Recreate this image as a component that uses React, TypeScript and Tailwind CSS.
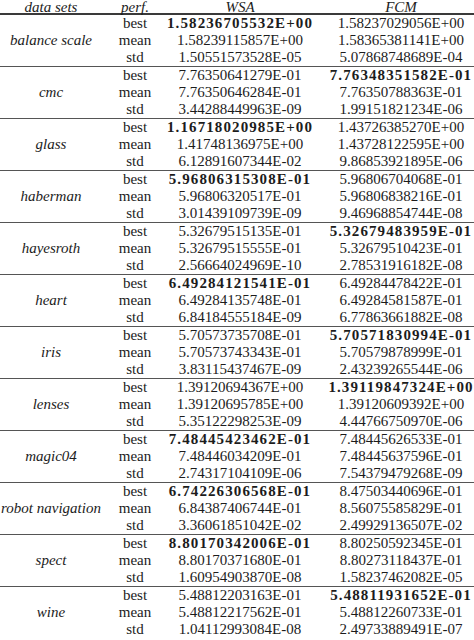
type Group = {
  name: string
  rows: [string, string, string, 'wsa' | 'fcm' | null][]
}

const groups: Group[] = [
  {
    name: 'balance scale',
    rows: [
      ['best', '1.58236705532E+00', '1.58237029056E+00', 'wsa'],
      ['mean', '1.58239115857E+00', '1.58365381141E+00', null],
      ['std', '1.50551573528E-05', '5.07868748689E-04', null],
    ],
  },
  {
    name: 'cmc',
    rows: [
      ['best', '7.76350641279E-01', '7.76348351582E-01', 'fcm'],
      ['mean', '7.76350646284E-01', '7.76350788363E-01', null],
      ['std', '3.44288449963E-09', '1.99151821234E-06', null],
    ],
  },
  {
    name: 'glass',
    rows: [
      ['best', '1.16718020985E+00', '1.43726385270E+00', 'wsa'],
      ['mean', '1.41748136975E+00', '1.43728122595E+00', null],
      ['std', '6.12891607344E-02', '9.86853921895E-06', null],
    ],
  },
  {
    name: 'haberman',
    rows: [
      ['best', '5.96806315308E-01', '5.96806704068E-01', 'wsa'],
      ['mean', '5.96806320517E-01', '5.96806838216E-01', null],
      ['std', '3.01439109739E-09', '9.46968854744E-08', null],
    ],
  },
  {
    name: 'hayesroth',
    rows: [
      ['best', '5.32679515135E-01', '5.32679483959E-01', 'fcm'],
      ['mean', '5.32679515555E-01', '5.32679510423E-01', null],
      ['std', '2.56664024969E-10', '2.78531916182E-08', null],
    ],
  },
  {
    name: 'heart',
    rows: [
      ['best', '6.49284121541E-01', '6.49284478422E-01', 'wsa'],
      ['mean', '6.49284135748E-01', '6.49284581587E-01', null],
      ['std', '6.84184555184E-09', '6.77863661882E-08', null],
    ],
  },
  {
    name: 'iris',
    rows: [
      ['best', '5.70573735708E-01', '5.70571830994E-01', 'fcm'],
      ['mean', '5.70573743343E-01', '5.70579878999E-01', null],
      ['std', '3.83115437467E-09', '2.43239265544E-06', null],
    ],
  },
  {
    name: 'lenses',
    rows: [
      ['best', '1.39120694367E+00', '1.39119847324E+00', 'fcm'],
      ['mean', '1.39120695785E+00', '1.39120609392E+00', null],
      ['std', '5.35122298253E-09', '4.44766750970E-06', null],
    ],
  },
  {
    name: 'magic04',
    rows: [
      ['best', '7.48445423462E-01', '7.48445626533E-01', 'wsa'],
      ['mean', '7.48446034209E-01', '7.48445637596E-01', null],
      ['std', '2.74317104109E-06', '7.54379479268E-09', null],
    ],
  },
  {
    name: 'robot navigation',
    rows: [
      ['best', '6.74226306568E-01', '8.47503440696E-01', 'wsa'],
      ['mean', '6.84387406744E-01', '8.56075585829E-01', null],
      ['std', '3.36061851042E-02', '2.49929136507E-02', null],
    ],
  },
  {
    name: 'spect',
    rows: [
      ['best', '8.80170342006E-01', '8.80250592345E-01', 'wsa'],
      ['mean', '8.80170371680E-01', '8.80273118437E-01', null],
      ['std', '1.60954903870E-08', '1.58237462082E-05', null],
    ],
  },
  {
    name: 'wine',
    rows: [
      ['best', '5.48812203163E-01', '5.48811931652E-01', 'fcm'],
      ['mean', '5.48812217562E-01', '5.48812260733E-01', null],
      ['std', '1.04112993084E-08', '2.49733889491E-07', null],
    ],
  },
]

function Num({ value, bold }: { value: string; bold: boolean }) {
  return bold ? (
    <span className="font-bold tracking-[1.1px]">{value}</span>
  ) : (
    <span>{value}</span>
  )
}

export default function App() {
  return (
    <div className="w-[474px] h-[640px] overflow-hidden bg-white text-[#1c1c1c] text-[15px] leading-[17px] font-['Liberation_Serif','Times_New_Roman',serif]">
      {/* header */}
      <div className="flex h-[15px] leading-[15px] italic border-b-2 border-[#3a3a3a] whitespace-nowrap">
        <div className="w-[102px] text-center">data sets</div>
        <div className="w-[66px] text-center">perf.</div>
        <div className="w-[144px] text-center">WSA</div>
        <div className="w-[16px]" />
        <div className="w-[146px] text-center">FCM</div>
      </div>

      {groups.map((g, i) => (
        <div
          key={g.name}
          className={
            i === 0 ? 'flex whitespace-nowrap' : 'flex whitespace-nowrap border-t border-[#555]'
          }
        >
          <div className="w-[102px] flex items-center justify-center italic">{g.name}</div>
          <div className="flex flex-col">
            {g.rows.map(([perf, wsa, fcm, win]) => (
              <div key={perf} className="flex h-[17px]">
                <div className="w-[66px] text-center">{perf}</div>
                <div className="w-[144px] flex justify-center">
                  <Num value={wsa} bold={win === 'wsa'} />
                </div>
                <div className="w-[16px]" />
                <div className="w-[146px] flex justify-center">
                  <Num value={fcm} bold={win === 'fcm'} />
                </div>
              </div>
            ))}
          </div>
        </div>
      ))}
    </div>
  )
}
